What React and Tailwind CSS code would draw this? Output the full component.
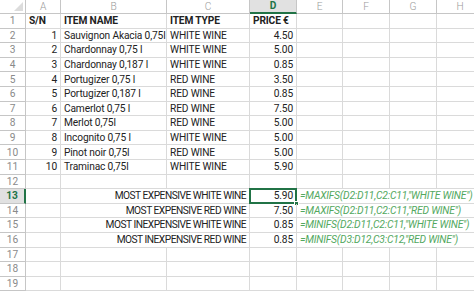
// Hoja de cálculo con MAXIFS / MINIFS
const COLS = ["A", "B", "C", "D", "E", "F", "G", "H"];

const ITEMS = [
  [1, "Sauvignon Akacia 0,75l", "WHITE WINE", "4.50"],
  [2, "Chardonnay 0,75 l", "WHITE WINE", "5.00"],
  [3, "Chardonnay 0,187 l", "WHITE WINE", "0.85"],
  [4, "Portugizer 0,75 l", "RED WINE", "3.50"],
  [5, "Portugizer 0,187 l", "RED WINE", "0.85"],
  [6, "Camerlot 0,75 l", "RED WINE", "7.50"],
  [7, "Merlot 0,75l", "RED WINE", "5.00"],
  [8, "Incognito 0,75 l", "WHITE WINE", "5.00"],
  [9, "Pinot noir 0,75l", "RED WINE", "5.00"],
  [10, "Traminac 0,75l", "WHITE WINE", "5.90"],
];

const SUMMARY = [
  ["MOST EXPENSIVE WHITE WINE", "5.90", '=MAXIFS(D2:D11,C2:C11,"WHITE WINE")'],
  ["MOST EXPENSIVE RED WINE", "7.50", '=MAXIFS(D2:D11,C2:C11,"RED WINE")'],
  ["MOST INEXPENSIVE WHITE WINE", "0.85", '=MINIFS(D2:D11,C2:C11,"WHITE WINE")'],
  ["MOST INEXPENSIVE RED WINE", "0.85", '=MINIFS(D3:D12,C3:C12,"RED WINE")'],
];

const cell = "border-r border-b border-[#dadada] px-[3px] flex items-center whitespace-nowrap overflow-visible";

function RowHead({ n, active }) {
  return (
    <div
      className={`flex items-center justify-center border-b tracking-normal ${
        active
          ? "bg-[#e1e1e1] text-[#217346] font-bold border-r-2 border-r-[#217346] border-b-[#c6c6c6]"
          : "bg-white text-[#8a8a8a] border-r border-[#c6c6c6]"
      }`}
    >
      {n}
    </div>
  );
}

function Empty({ n }) {
  return Array.from({ length: n }).map((_, i) => <div key={i} className={cell} />);
}

export default function App() {
  return (
    <div className="w-[474px] h-[292px] overflow-hidden bg-white text-[10.2px] tracking-[-0.15px] text-[#222]" style={{ fontFamily: 'Roboto, "Liberation Sans", sans-serif' }}>
      <div className="grid grid-cols-[26px_35px_106px_83px_47px_46px_47px_47px_47px] grid-rows-[14px_repeat(19,14.6px)] w-[484px]">
        {/* Esquina */}
        <div className="relative bg-white border-r border-b border-[#c6c6c6]">
          <div className="absolute right-[2px] bottom-[2px] w-0 h-0 border-l-[9px] border-l-transparent border-b-[9px] border-b-[#dcdcdc]" />
        </div>
        {COLS.map((c) =>
          c === "D" ? (
            <div key={c} className="flex items-center justify-center bg-[#e1e1e1] text-[#217346] font-bold border-r border-[#c6c6c6] border-b-2 border-b-[#217346]">
              {c}
            </div>
          ) : (
            <div key={c} className="flex items-center justify-center bg-white text-[#9a9a9a] font-light border-r border-b border-[#c6c6c6]">
              {c}
            </div>
          )
        )}

        {/* Fila 1 */}
        <RowHead n={1} />
        <div className={`${cell} font-bold`}>S/N</div>
        <div className={`${cell} font-bold`}>ITEM NAME</div>
        <div className={`${cell} font-bold`}>ITEM TYPE</div>
        <div className={`${cell} font-bold`}>PRICE €</div>
        <Empty n={4} />

        {ITEMS.map(([sn, name, type, price], i) => (
          <div key={sn} className="contents">
            <RowHead n={i + 2} />
            <div className={`${cell} justify-end`}>{sn}</div>
            <div className={cell}>{name}</div>
            <div className={cell}>{type}</div>
            <div className={`${cell} justify-end`}>{price}</div>
            <Empty n={4} />
          </div>
        ))}

        {/* Fila 12 */}
        <RowHead n={12} />
        <Empty n={8} />

        {SUMMARY.map(([label, value, formula], i) => (
          <div key={label} className="contents">
            <RowHead n={i + 13} active={i === 0} />
            <div className={cell} />
            <div className={`${cell} col-span-2 justify-end tracking-[-0.5px]`}>{label}</div>
            <div className={`${cell} justify-end relative`}>
              {value}
              {i === 0 && (
                <div className="absolute -left-px -top-px -right-px -bottom-px border-2 border-[#217346]">
                  <div className="absolute -right-[4px] -bottom-[4px] w-[5px] h-[5px] bg-[#217346] border border-white" />
                </div>
              )}
            </div>
            <div className={`${cell} col-span-4 italic text-[10.3px] tracking-[-0.2px] text-[#52a85e]`}>{formula}</div>
          </div>
        ))}

        {[17, 18, 19].map((n) => (
          <div key={n} className="contents">
            <RowHead n={n} />
            <Empty n={8} />
          </div>
        ))}
      </div>
    </div>
  );
}
